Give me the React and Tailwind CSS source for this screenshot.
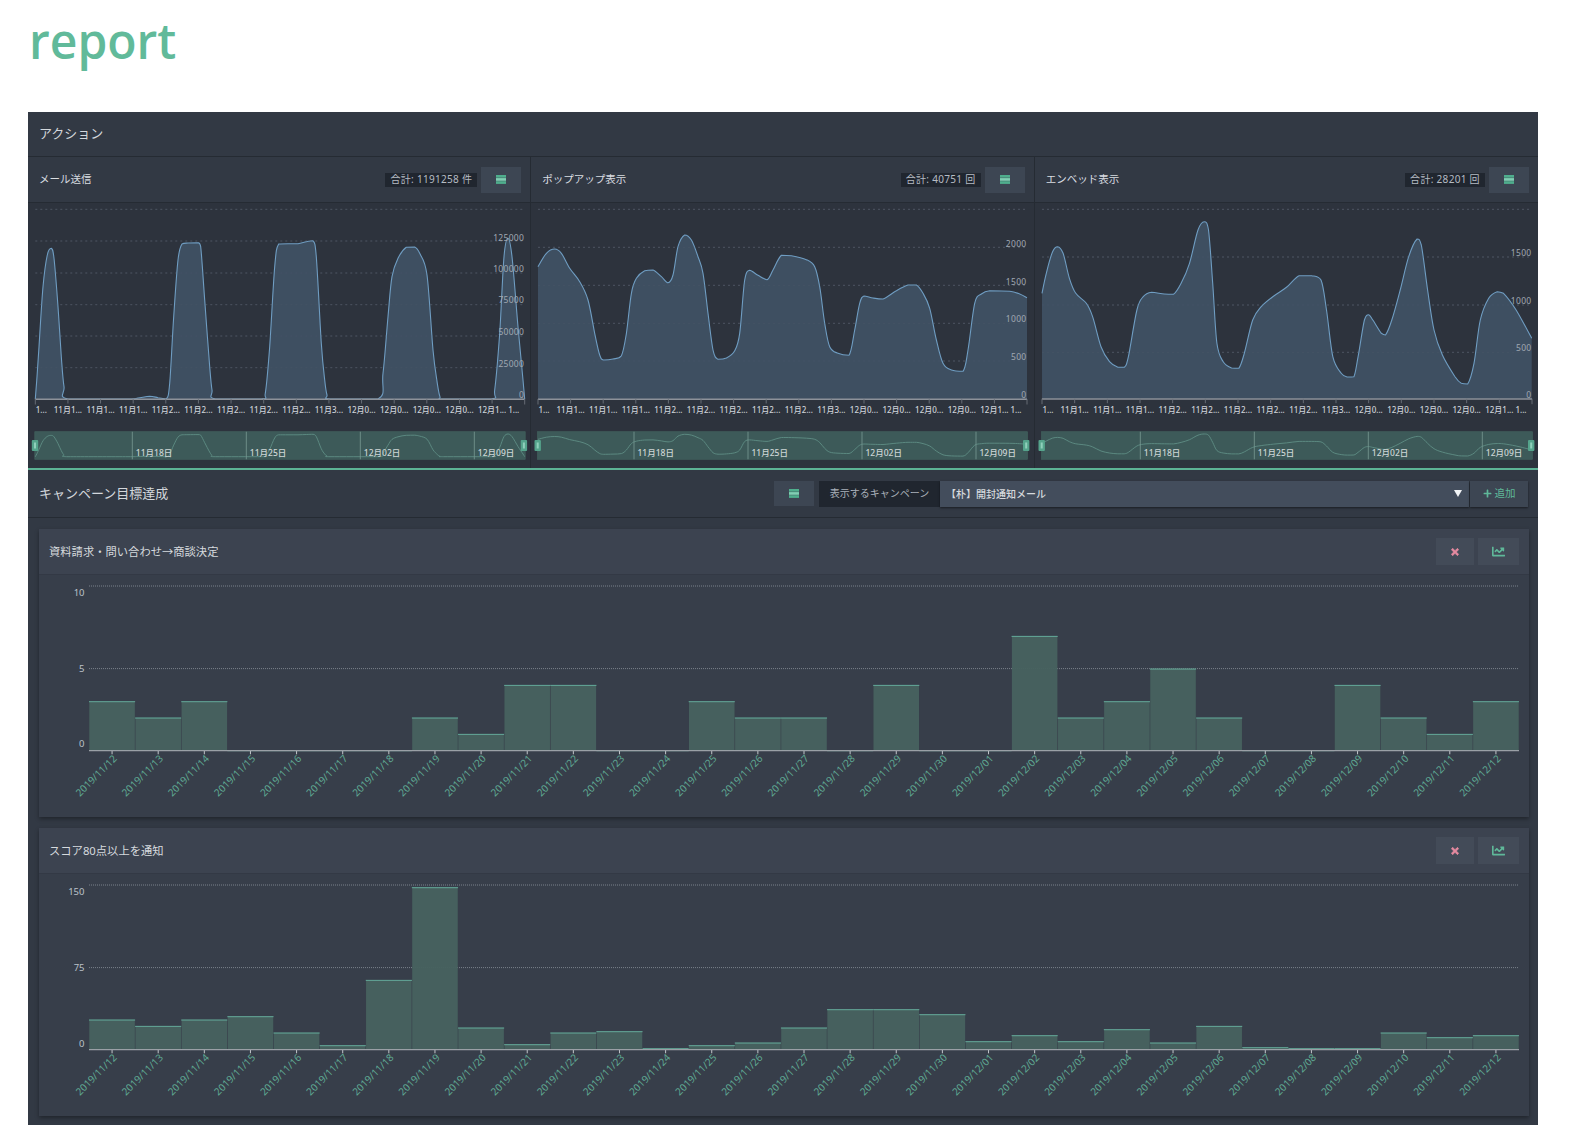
import React from "react";
import { FaTimes, FaChartLine, FaPlus } from "react-icons/fa";

const FONT = "font-['Noto_Sans','Noto_Sans_CJK_JP',sans-serif]";
const FF = "'Noto Sans','Noto Sans CJK JP',sans-serif";

function smooth(pts) {
  let d = `M${pts[0][0].toFixed(1)} ${pts[0][1].toFixed(1)}`;
  for (let i = 0; i < pts.length - 1; i++) {
    const p0 = pts[Math.max(0, i - 1)], p1 = pts[i], p2 = pts[i + 1], p3 = pts[Math.min(pts.length - 1, i + 2)];
    const lo = Math.min(p1[1], p2[1]), hi = Math.max(p1[1], p2[1]);
    const cl = (v) => Math.min(hi, Math.max(lo, v));
    const c1x = p1[0] + (p2[0] - p0[0]) / 6, c1y = cl(p1[1] + (p2[1] - p0[1]) / 6);
    const c2x = p2[0] - (p3[0] - p1[0]) / 6, c2y = cl(p2[1] - (p3[1] - p1[1]) / 6);
    d += `C${c1x.toFixed(1)} ${c1y.toFixed(1)} ${c2x.toFixed(1)} ${c2y.toFixed(1)} ${p2[0].toFixed(1)} ${p2[1].toFixed(1)}`;
  }
  return d;
}

const C1 = [[22,597],[27,530],[33,440],[45,260],[58,165],[70,145],[78,175],[90,320],[100,470],[108,560],[120,597],[300,597],[330,594],[365,589],[390,593],[415,597],[425,550],[437,350],[450,180],[462,132],[480,129],[510,128],[518,140],[530,300],[545,500],[552,570],[562,597],[700,597],[712,580],[725,440],[740,200],[752,132],[780,131],[810,131],[835,125],[855,122],[865,170],[880,430],[890,540],[897,585],[906,597],[1050,597],[1065,520],[1080,350],[1092,230],[1110,175],[1135,142],[1160,141],[1175,160],[1197,225],[1215,450],[1228,550],[1236,590],[1247,597],[1390,597],[1400,570],[1415,400],[1428,170],[1440,115],[1452,170],[1470,380],[1485,540],[1490,597]];
const C2 = [[25,200],[50,160],[75,147],[95,160],[120,205],[150,245],[175,300],[195,400],[210,465],[222,480],[250,477],[275,467],[290,400],[305,280],[320,235],[345,212],[370,210],[395,230],[415,248],[430,225],[445,140],[465,105],[485,120],[505,170],[520,220],[535,340],[550,450],[565,478],[590,474],[615,452],[630,400],[645,240],[660,211],[685,226],[712,239],[730,210],[755,166],[785,167],[830,179],[855,200],[870,260],[885,370],[900,440],[925,460],[958,466],[975,390],[990,310],[1003,288],[1030,294],[1060,297],[1100,272],[1135,255],[1160,255],[1180,280],[1200,325],[1220,420],[1240,490],[1265,510],[1300,514],[1315,450],[1335,310],[1355,282],[1380,272],[1440,274],[1470,282],[1492,293]];
const C3raw = [[385,430],[395,370],[410,305],[422,290],[435,310],[450,385],[465,430],[490,460],[505,500],[525,590],[545,635],[565,652],[580,652],[590,620],[610,480],[625,440],[645,427],[675,432],[697,433],[715,400],[735,340],[755,240],[770,215],[780,240],[790,400],[800,580],[815,635],[835,654],[852,655],[865,610],[885,510],[905,470],[935,438],[965,412],[995,377],[1025,377],[1047,390],[1060,480],[1075,620],[1095,670],[1110,681],[1125,680],[1135,620],[1150,510],[1160,494],[1170,510],[1190,550],[1200,555],[1215,510],[1235,420],[1255,320],[1275,267],[1285,285],[1300,420],[1315,540],[1335,615],[1365,680],[1380,700],[1395,702],[1410,640],[1425,510],[1445,445],[1465,425],[1480,430],[1510,480],[1547,565]];

const CHARTS = [
  {
    title: "メール送信", total: "合計: 1191258 件", tagW: 92,
    line: C1.map(([x, y]) => [x / 3, y / 3 - 2]),
    mini: (y) => 770 / 3 - 2 + (y - 597 / 3 + 2) * 0.141,
    left: 7.3, right: 496.7, base: 197,
    grids: [7.3, 39, 71, 102.7, 134, 165.7],
    ylabels: [["125000", 35.7], ["100000", 66.7], ["75000", 98.3], ["50000", 130], ["25000", 162], ["0", 193.3]],
    dx: 0,
  },
  {
    title: "ポップアップ表示", total: "合計: 40751 回", tagW: 80,
    line: C2.map(([x, y]) => [x / 3 - 1.3, y / 3 - 2]),
    mini: (y) => (686 + 0.16 * (y + 2) * 3) / 3 - 2,
    left: 7, right: 496, base: 197,
    grids: [7.3, 45.3, 83.3, 121.3, 159],
    ylabels: [["2000", 41.7], ["1500", 79.7], ["1000", 117], ["500", 155], ["0", 193]],
    dx: -1.3,
  },
  {
    title: "エンベッド表示", total: "合計: 28201 回", tagW: 80,
    line: C3raw.map(([x, y]) => [880 + x / 2.373 - 1035.2, 150 + y / 3 - 202]),
    mini: (y) => ((823 + 0.1355 * (y + 52) * 3) / 3 + 150) - 202,
    left: 7, right: 497, base: 196.7,
    grids: [7.3, 55, 103, 150.3],
    ylabels: [["1500", 50.7], ["1000", 98.7], ["500", 146.3], ["0", 193]],
    dx: 1,
  },
];

const LBL = ["1...", "11月1...", "11月1...", "11月1...", "11月2...", "11月2...", "11月2...", "11月2...", "11月2...", "11月3...", "12月0...", "12月0...", "12月0...", "12月0...", "12月1...", "1..."];
const MINI_L = [["11月18日", 104.3], ["11月25日", 218.3], ["12月02日", 332.3], ["12月09日", 446.3]];

function TableIcon() {
  return (
    <svg width="10" height="9" viewBox="0 0 10 9">
      <rect x="0" y="0" width="10" height="2.7" fill="#4fae8d" />
      <rect x="0" y="3.1" width="10" height="2.7" fill="#7fd0b3" />
      <rect x="0" y="6.2" width="10" height="2.7" fill="#4fae8d" />
    </svg>
  );
}

function LineChart({ c }) {
  const path = smooth(c.line);
  const first = c.line[0], last = c.line[c.line.length - 1];
  const area = `${path}L${last[0]} ${c.base}L${first[0]} ${c.base}Z`;
  const miniPts = c.line.map(([x, y]) => [x, c.mini(y)]);
  const step = (c.right - c.left) / 15;
  const miniTop = 229.7, miniBot = 257.3;
  return (
    <svg width="503" height="265" viewBox="0 1 503 265" className="block">
      {c.grids.map((y) => (
        <line key={y} x1={c.left} x2={c.right} y1={y} y2={y} stroke="#4a525e" strokeWidth="1" strokeDasharray="2 3" />
      ))}
      <path d={area} fill="#3f5063" fillOpacity="0.96" />
      <path d={path} fill="none" stroke="#6f9dc2" strokeWidth="1.1" />
      {c.grids.map((y) => (
        <line key={"o" + y} x1={c.left} x2={c.right} y1={y} y2={y} stroke="#56616f" strokeOpacity="0.2" strokeWidth="1" strokeDasharray="2 3" />
      ))}
      <line x1={c.left} x2={c.right} y1={c.base + 0.3} y2={c.base + 0.3} stroke="#8d929a" strokeWidth="1.4" />
      {LBL.concat([""]).map((l, i) => {
        const x = c.left + i * step;
        const edge = i === 0 || i === 15;
        return (
          <line key={i} x1={x} x2={x} y1={c.base} y2={c.base + (edge ? 5.5 : 4.5)} stroke="#6d737c" strokeWidth="0.9" />
        );
      })}
      {LBL.map((l, i) => {
        const x = c.left + (i === 15 ? 15 * step - 11 : i === 0 ? 6 : i * step);
        return (
          <text key={i} x={x} y={210.5} textAnchor="middle" fontSize="8" fontWeight="500" fill="#cfd4da" fontFamily={FF}>{l}</text>
        );
      })}
      {c.ylabels.map(([l, y]) => (
        <text key={l} x={c.right - 0.5} y={y + 3} textAnchor="end" fontSize="8.5" letterSpacing="0.3" fill="#a0a8b2" fontFamily={FF}>{l}</text>
      ))}
      <rect x={c.left - 0.5} y={miniTop} width={c.right - c.left + 1} height={miniBot - miniTop} fill="#3d5a59" stroke="#43645f" strokeWidth="0.6" />
      <path d={smooth(miniPts)} fill="none" stroke="#5f8d85" strokeWidth="0.9" />
      {MINI_L.map(([l, x]) => (
        <g key={l}>
          <line x1={x + c.dx} x2={x + c.dx} y1={miniTop} y2={miniBot} stroke="#7a9a94" strokeWidth="0.8" />
          <text x={x + c.dx + 3.5} y={253.5} fontSize="8.5" fontWeight="500" fill="#cdd6d6" fontFamily={FF}>{l}</text>
        </g>
      ))}
      {[c.left - 0.5, c.right - 1].map((x, i) => (
        <g key={i}>
          <rect x={x - 3} y={238} width="6.4" height="11" rx="1" fill="#55a48c" />
          <rect x={x - 0.8} y={240.5} width="2" height="6" fill="#8fd0bb" />
        </g>
      ))}
    </svg>
  );
}

const DATES = [];
for (let i = 12; i <= 30; i++) DATES.push(`2019/11/${i}`);
for (let i = 1; i <= 12; i++) DATES.push(`2019/12/${String(i).padStart(2, "0")}`);

const BAR1 = [3,2,3,0,0,0,0,2,1,4,4,0,0,3,2,2,0,4,0,0,7,2,3,5,2,0,0,4,2,1,3].map((v) => v * 16.33);
const ZY2 = [451,470,451,441,490,528,332,54,475,525,490,486,537,528,520,475,420,420,435,516,498,516,480,520,470,534,537,537,490,504,498];
const BAR2 = ZY2.map((z) => (540 - z) / 3);

function BarChart({ bars, labels }) {
  const L = 50, R = 1480, T = 11, B = 175.3, M = 93.6;
  const bw = (R - L) / 31;
  return (
    <svg width="1490" height="242" viewBox="0 0 1490 242" className="block">
      <line x1={L} x2={R} y1={T} y2={T} stroke="#7a818b" strokeDasharray="1 1" />
      <line x1={L} x2={R} y1={M} y2={M} stroke="#7a818b" strokeDasharray="1 1" />
      {labels.map(([l, y]) => (
        <text key={l} x={45.5} y={y} textAnchor="end" fontSize="9.5" fill="#bcc2c9" fontFamily={FF}>{l}</text>
      ))}
      {bars.map((h, i) => {
        const x = L + i * bw;
        return (
          <g key={i}>
            <rect x={x + 0.3} y={B - h} width={bw - 0.6} height={h} fill="#47625f" fillOpacity="0.96" />
            <line x1={x} x2={x + bw} y1={B - h + 0.4} y2={B - h + 0.4} stroke="#64a99a" strokeWidth="1" />
            <line x1={x + bw / 2} x2={x + bw / 2} y1={B} y2={B + 4} stroke="#c3c7cc" strokeWidth="1" />
            <text
              transform={`translate(${x + bw / 2 + 5.5} ${B + 9}) rotate(-45)`}
              textAnchor="end"
              fontSize="10"
              fill="#5fa993"
              fontFamily={FF}
            >
              {DATES[i]}
            </text>
          </g>
        );
      })}
      <line x1={L} x2={R} y1={B + 0.3} y2={B + 0.3} stroke="#9aa0a6" strokeWidth="1.2" />
    </svg>
  );
}

function Card({ title, bars, labels }) {
  return (
    <div className="bg-[#373e4a] shadow-[0_2px_4px_rgba(0,0,0,0.35)]">
      <div className="h-[46px] flex items-center justify-between pl-[10px] pr-[10px] bg-[#3c4350] border-b border-[#333945]">
        <span className="text-[11.3px] pt-[2px] text-[#d6dade]">{title}</span>
        <div className="flex gap-[4px]">
          <button className="w-[38px] h-[27px] bg-[#434b58] flex items-center justify-center text-[#e58aa0] text-[10px]">
            <FaTimes className="stroke-[40px]" />
          </button>
          <button className="w-[41px] h-[27px] bg-[#434b58] flex items-center justify-center text-[#5fb899] text-[13px]">
            <FaChartLine />
          </button>
        </div>
      </div>
      <BarChart bars={bars} labels={labels} />
    </div>
  );
}

export default function App() {
  return (
    <div className={`min-h-[1146px] bg-white ${FONT}`}>
      <div className="h-[112px] pl-[29px]">
        <div className="text-[48px] leading-[82px] font-semibold text-[#61ba9a] font-['Open_Sans',sans-serif]">report</div>
      </div>
      <div className="ml-[28px] w-[1510px] h-[1013px] bg-[#323944]">
        <div className="h-[45px] flex items-center pl-[11px] text-[13px] text-[#d3d7dc] border-b border-[#252b33]">アクション</div>
        <div className="grid grid-cols-3">
          {CHARTS.map((c, i) => (
            <div key={i} className={i < 2 ? "border-r border-[#252b33]" : ""}>
              <div className="h-[46px] flex items-center justify-between pl-[11px] pr-[9px] border-b border-[#252b33] bg-[#323944]">
                <span className="text-[10.5px] pt-[1px] text-[#d9dde1]">{c.title}</span>
                <div className="flex items-center gap-[4px]">
                  <span className="h-[14px] flex items-center justify-center bg-[#20262f] text-[10px] text-[#b6bcc4] tracking-[0.3px]" style={{ width: c.tagW }}>{c.total}</span>
                  <button className="w-[40px] h-[26px] bg-[#3d4653] flex items-center justify-center"><TableIcon /></button>
                </div>
              </div>
              <div className="h-[265px] bg-[#2d333d] overflow-hidden">
                <LineChart c={c} />
              </div>
            </div>
          ))}
        </div>
        <div className="h-[50px] border-t-2 border-b border-t-[#5db295] border-b-[#252b33] flex items-center justify-between pl-[11px] pr-[10px]">
          <span className="text-[13px] text-[#d3d7dc]">キャンペーン目標達成</span>
          <div className="flex items-center">
            <button className="w-[40px] h-[25px] bg-[#3d4653] flex items-center justify-center mr-[5px]"><TableIcon /></button>
            <span className="w-[121px] h-[26px] bg-[#20262f] flex items-center justify-center text-[10px] text-[#aab1ba]">表示するキャンペーン</span>
            <div className="w-[529px] h-[26px] bg-[#434d5c] shadow-[0_1px_2px_rgba(0,0,0,0.5)] flex items-center justify-between pl-[6px] pr-[7px] text-[10px] font-medium text-[#d6dade]">
              <span className="pt-[1px]">【朴】開封通知メール</span>
              <svg width="8" height="7" viewBox="0 0 8 7"><path d="M0 0H8L4 7Z" fill="#f2f4f6" /></svg>
            </div>
            <button className="ml-[1px] w-[58px] h-[26px] bg-[#3d4653] shadow-[0_1px_2px_rgba(0,0,0,0.5)] flex items-center justify-center gap-[3px] text-[10.5px] text-[#5fb899]">
              <FaPlus className="text-[9px]" />
              <span className="pt-[1px]">追加</span>
            </button>
          </div>
        </div>
        <div className="pt-[11px] pl-[11px] pr-[9px] flex flex-col gap-[11px]">
          <Card title="資料請求・問い合わせ→商談決定" bars={BAR1} labels={[["10", 21], ["5", 97], ["0", 172]]} />
          <Card title="スコア80点以上を通知" bars={BAR2} labels={[["150", 21], ["75", 97], ["0", 172.5]]} />
        </div>
      </div>
    </div>
  );
}
